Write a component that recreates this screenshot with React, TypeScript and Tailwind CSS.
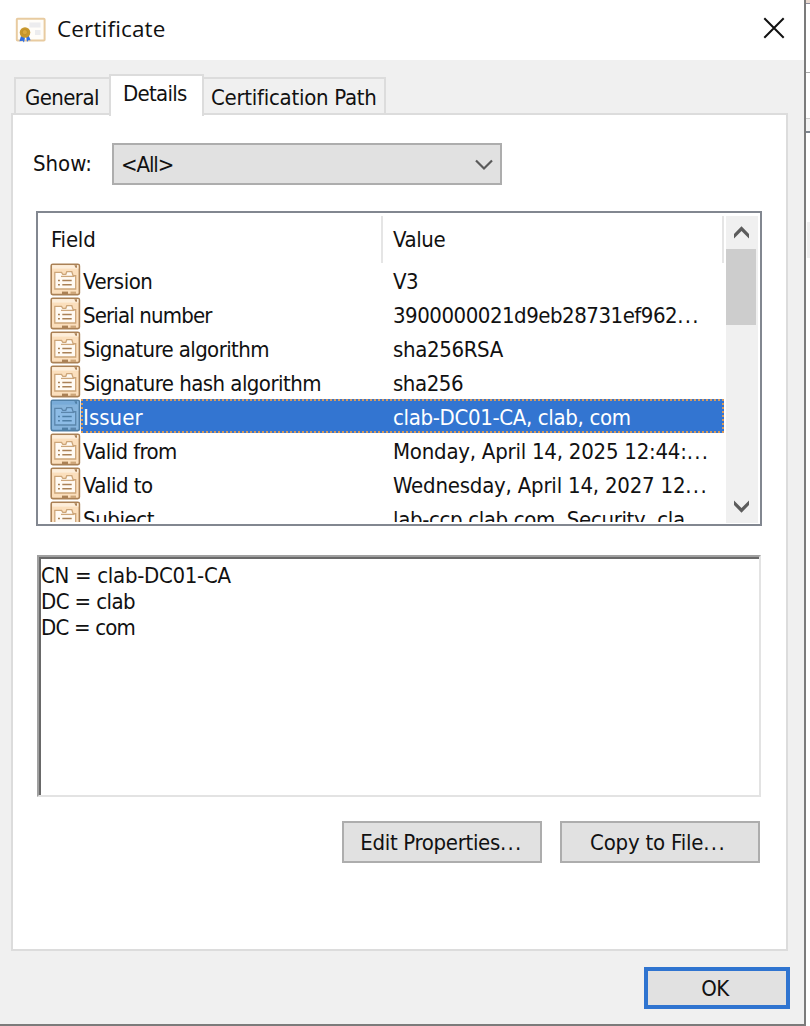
import React from "react";

type Field = { name: string; value: string; more?: boolean; nameCls?: string; valueCls?: string; selected?: boolean };

const fields: Field[] = [
  { name: "Version", value: "V3", nameCls: "tracking-[-0.45px]" },
  { name: "Serial number", value: "3900000021d9eb28731ef962", more: true, nameCls: "tracking-[-0.85px]", valueCls: "tracking-[-0.48px]" },
  { name: "Signature algorithm", value: "sha256RSA", valueCls: "tracking-[-0.35px]" },
  { name: "Signature hash algorithm", value: "sha256", nameCls: "tracking-[-0.55px]", valueCls: "tracking-[-0.45px]" },
  { name: "Issuer", value: "clab-DC01-CA, clab, com", nameCls: "tracking-[0.05px]", valueCls: "tracking-[-0.34px]", selected: true },
  { name: "Valid from", value: "Monday, April 14, 2025 12:44:", more: true, valueCls: "tracking-[-0.23px]" },
  { name: "Valid to", value: "Wednesday, April 14, 2027 12", more: true, nameCls: "tracking-[-0.5px]", valueCls: "tracking-[-0.21px]" },
  { name: "Subject", value: "lab-ccp.clab.com, Security, cla", more: true, nameCls: "tracking-[-0.4px]", valueCls: "tracking-[-0.35px]" },
];

function Dots() {
  return <span className="tracking-[1.3px]">...</span>;
}

function CertificateIcon() {
  return (
    <svg className="h-[27px] w-[31px] shrink-0" viewBox="0 0 31 27">
      <rect x="1.8" y="1.8" width="27.8" height="21.8" rx="0.8" fill="#fffdf9" stroke="#e8cba0" strokeWidth="2" />
      <path d="M14.500 5.500h11v5h-11zM20 13h5.500v5H20z" fill="#ececee" />
      <path d="M6 19l-1.600 5.200 3.200-.4 1.400 1.800 1-5zM11 19l1 6 1.400-1.800h2.200l-2-5z" fill="#2f6fe4" />
      <circle cx="10" cy="15.500" r="5.300" fill="#c9982c" />
      <circle cx="9.800" cy="15.200" r="2.600" fill="#dba93c" stroke="#b78926" strokeWidth="0.7" />
    </svg>
  );
}

function FieldIcon({ selected }: { selected?: boolean }) {
  const edge = selected ? "#4f7fa6" : "#aa8156";
  const line = selected ? "#5b86ac" : "#cda67a";
  const body = selected ? "#86b4dc" : "#fbdfbd";
  const top = selected ? "#78abd8" : "#fdeedb";
  const paper = selected ? "#8dbce6" : "#fffaf3";
  return (
    <svg className="h-[34px] w-[31px] shrink-0" viewBox="0 0 31 34">
      <rect x="1.200" y="1.200" width="28.200" height="30.400" rx="1.600" fill={body} stroke={edge} strokeWidth="1.600" />
      <path d="M2.200 2.200h26.200v3.400H2.200z" fill={top} />
      <path d="M24.300 2.200h2.700v2.600h-1.400z" fill={edge} />
      <path d="M4.800 26V9.300h6.700l1.300 2h3l1-2.600h5l1.300 4h2.600V26z" fill={paper} stroke={line} strokeWidth="1.300" />
      <path d="M11 13.400h13.500" stroke={line} strokeWidth="1.300" />
      <path d="M8 17.400h1.900M8 21.800h1.900M12.300 17.400h9.400M12.300 21.800h9.400" stroke={edge} strokeWidth="1.500" />
      <path d="M12 28.600h6v2.400h-6z" fill={edge} />
      <path d="M20.500 28.600h5.500v2.400h-5.500z" fill={line} />
    </svg>
  );
}

function Row({ name, value, more, nameCls = "", valueCls = "", selected }: Field) {
  return (
    <div className="flex h-[34px] shrink-0">
      <FieldIcon selected={selected} />
      <div
        className={`flex h-[34px] w-[643px] items-center whitespace-nowrap ${
          selected ? "border-2 border-dotted border-[#d79a5c] bg-[#3375d1] pt-[3px] text-white" : "pt-[3px] pl-[2px]"
        }`}
      >
        <span className={`w-[310px] ${nameCls}`}>{name}</span>
        <span className={valueCls}>
          {value}
          {more && <Dots />}
        </span>
      </div>
    </div>
  );
}

function Chevron({ up }: { up?: boolean }) {
  return (
    <svg className="h-[13px] w-[15px]" viewBox="0 0 15 13">
      <path d={up ? "M0 8L7.500 .3 15 8v4.500L7.500 5 0 12.500z" : "M0 5l7.500 7.700L15 5V.500L7.500 8 0 .500z"} fill="#5c5c5c" />
    </svg>
  );
}

export default function App() {
  return (
    <div className="flex h-[1026px] w-[810px] overflow-hidden bg-white font-['DejaVu_Sans_Condensed','DejaVu_Sans',sans-serif] text-[22px] leading-[26px] tracking-[-0.6px] text-[#111]">
      <div className="flex w-[806px] flex-col border-r-2 border-b-2 border-[#7b7b7b] bg-[#f0f0f0]">
        <header className="flex h-[60px] shrink-0 items-center bg-white pl-[15px]">
          <CertificateIcon />
          <h1 className="-mt-[2px] ml-[11px] font-['Open_Sans','Noto_Sans',sans-serif] text-[22.5px] tracking-[0.15px]">Certificate</h1>
          <svg className="-mt-[5px] mr-[18px] ml-auto h-6 w-6" viewBox="0 0 24 24">
            <path d="M2.300 2.300l19.400 19.400M21.700 2.300L2.300 21.700" stroke="#111" strokeWidth="2" />
          </svg>
        </header>

        <div className="flex h-[55px] shrink-0 items-end pl-[14px]">
          <div className="flex h-[38px] w-[95px] items-center border-2 border-r-0 border-b-0 border-[#dcdcdc] pt-[2px] pl-[9px]">General</div>
          <div className="z-10 -mb-px flex h-[42px] w-[95px] items-center border-2 border-b-0 border-[#dcdcdc] bg-white pb-[4px] pl-[12px] tracking-[-0.7px]">Details</div>
          <div className="flex h-[38px] w-[182px] items-center border-2 border-b-0 border-l-0 border-[#dcdcdc] pt-[2px] pl-[7px] tracking-[-0.27px] whitespace-nowrap">Certification Path</div>
        </div>

        <main className="-mt-[2px] ml-[11px] flex h-[838px] w-[777px] shrink-0 flex-col border-2 border-[#dcdcdc] bg-white">
          <div className="mt-[28px] flex h-[42px] shrink-0 items-center pl-[20px]">
            <span className="w-[79px] tracking-[0px]">Show:</span>
            <div className="flex h-[42px] w-[390px] items-center justify-between border-2 border-[#adadad] bg-[#e1e1e1] pt-[2px] pr-[6px] pl-[7px]">
              <span className="tracking-[-1.1px]">&lt;All&gt;</span>
              <svg className="h-[14px] w-5" viewBox="0 0 20 14">
                <path d="M2 2.500l8 8L18 2.500" fill="none" stroke="#5a5a5a" strokeWidth="2.200" />
              </svg>
            </div>
          </div>

          <section className="mt-[26px] ml-[23px] flex h-[315px] w-[726px] shrink-0 border-2 border-[#828790] p-[2px] pt-[3px]">
            <div className="flex h-[306px] w-[687px] flex-col overflow-hidden pl-[10px]">
              <div className="flex h-[47px] shrink-0 items-center">
                <span className="w-[331px] pl-px tracking-[-0.2px]">Field</span>
                <span className="flex h-full w-[343px] items-center border-x-2 border-[#e5e5e5] pl-[10px] tracking-[-0.4px]">Value</span>
              </div>
              {fields.map((f) => (
                <Row key={f.name} {...f} />
              ))}
            </div>
            <div className="flex h-[307px] w-[32px] flex-col items-center bg-[#f0f0f0]">
              <div className="flex h-[33px] w-[30px] shrink-0 items-center justify-center self-start"><Chevron up /></div>
              <div className="h-[76px] w-[30px] self-start bg-[#cdcdcd]" />
              <div className="mt-auto flex h-[33px] w-[30px] items-center justify-center self-start"><Chevron /></div>
            </div>
          </section>

          <div className="mt-[29px] ml-[24px] h-[242px] w-[724px] shrink-0 border-t-2 border-r-2 border-b-2 border-l-2 border-t-[#a0a0a0] border-r-[#e3e3e3] border-b-[#e3e3e3] border-l-[#a0a0a0]">
            <div className="h-full border-t-2 border-l-2 border-[#696969] pt-[4px] whitespace-pre">
              <div className="tracking-[-0.3px]">CN = clab-DC01-CA</div>
              <div>DC = clab</div>
              <div className="tracking-[-0.8px]">DC = com</div>
            </div>
          </div>

          <div className="mt-[24px] flex gap-[18px] pl-[329px]">
            <button className="h-[42px] w-[200px] border-2 border-[#adadad] bg-[#e1e1e1] pt-[2px] pr-[1px] tracking-[-0.33px] whitespace-nowrap">Edit Properties<Dots /></button>
            <button className="h-[42px] w-[200px] border-2 border-[#adadad] bg-[#e1e1e1] pt-[2px] pr-[4px] tracking-[-0.2px] whitespace-nowrap">Copy to File<Dots /></button>
          </div>
        </main>

        <button className="mt-[16px] ml-[644px] h-[42px] w-[146px] shrink-0 border-4 border-[#2f74d0] bg-[#e1e1e1] pt-[2px] pr-[4px]">OK</button>
      </div>

      <div className="flex w-1 flex-col">
        <div className="h-[4px] border-b border-[#8b8b9b] bg-[#ead9cf]" />
        <div className="h-[69px] border-b border-[#aaa]" />
        <div className="h-[46px] border-b border-[#ccc]" />
        <div className="h-[14px] border-b-2 border-[#7d858f] bg-[#f5f5f5]" />
        <div className="mt-[89px] ml-px h-[36px] bg-[#f0f0f0]" />
      </div>
    </div>
  );
}
